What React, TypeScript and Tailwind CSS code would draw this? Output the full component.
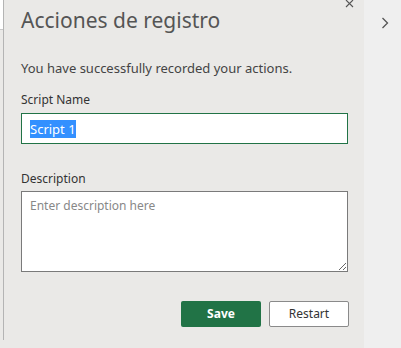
import React, { useEffect, useRef } from 'react';

const App: React.FC = () => {
  const nameRef = useRef<HTMLInputElement>(null);

  useEffect(() => {
    // the name comes up selected, ready to be typed over
    nameRef.current?.focus();
    nameRef.current?.select();
  }, []);

  return (
    <div
      className="w-[401px] h-[348px] flex bg-[#eae9e7] overflow-hidden"
      style={{ fontFamily: '"Noto Sans", "Open Sans", sans-serif' }}
    >
      {/* Left edge of the sheet */}
      <div className="w-[4px] h-[340px] flex flex-col border-r border-[#b4b4b4]">
        <div className="h-[30px] bg-white border-b border-[#c8c8c8]" />
      </div>

      {/* Panel */}
      <div className="relative w-[360px] pl-[17px] pr-[15px]">
        <svg width="9" height="9" viewBox="0 0 9 9" className="absolute left-[341px] -top-[1px]">
          <path d="M1 1 L8 8 M8 1 L1 8" stroke="#555" strokeWidth="1.1" />
        </svg>

        <h1 className="mt-[5px] text-[21px] leading-[30px] text-[#555]">Acciones de registro</h1>

        <p className="mt-[24px] text-[13px] leading-[18px] text-[#444]">
          You have successfully recorded your actions.
        </p>

        <label className="block mt-[15px] text-[12px] leading-[16px] text-[#333]">Script Name</label>
        <input
          ref={nameRef}
          defaultValue="Script 1"
          className="mt-[5px] w-[327px] h-[31px] px-[8px] bg-white border border-[#217346] text-[13px] text-[#333] outline-none selection:bg-[#3390ff] selection:text-white"
        />

        <label className="block mt-[27px] text-[12px] leading-[16px] text-[#333]">Description</label>
        <textarea
          placeholder="Enter description here"
          className="mt-[4px] w-[327px] h-[81px] px-[8px] py-[5px] bg-white border border-[#7a7a7a] text-[12px] text-[#333] placeholder:text-[#888] outline-none resize block"
        />

        <div className="mt-[29px] flex justify-end gap-[8px]">
          <button className="w-[80px] h-[26px] rounded-[2px] bg-[#217346] text-white text-[12px] font-bold">Save</button>
          <button className="w-[80px] h-[26px] rounded-[2px] bg-white border border-[#8a8a8a] text-[#333] text-[12px]">Restart</button>
        </div>
      </div>

      {/* Collapsed side strip */}
      <div className="flex-1 bg-[#efefef] flex justify-center pt-[17px]">
        <svg width="8" height="12" viewBox="0 0 8 12" className="ml-[4px]">
          <path d="M1.5 1 L6.5 6 L1.5 11" fill="none" stroke="#555" strokeWidth="1.3" />
        </svg>
      </div>
    </div>
  );
};

export default App;
